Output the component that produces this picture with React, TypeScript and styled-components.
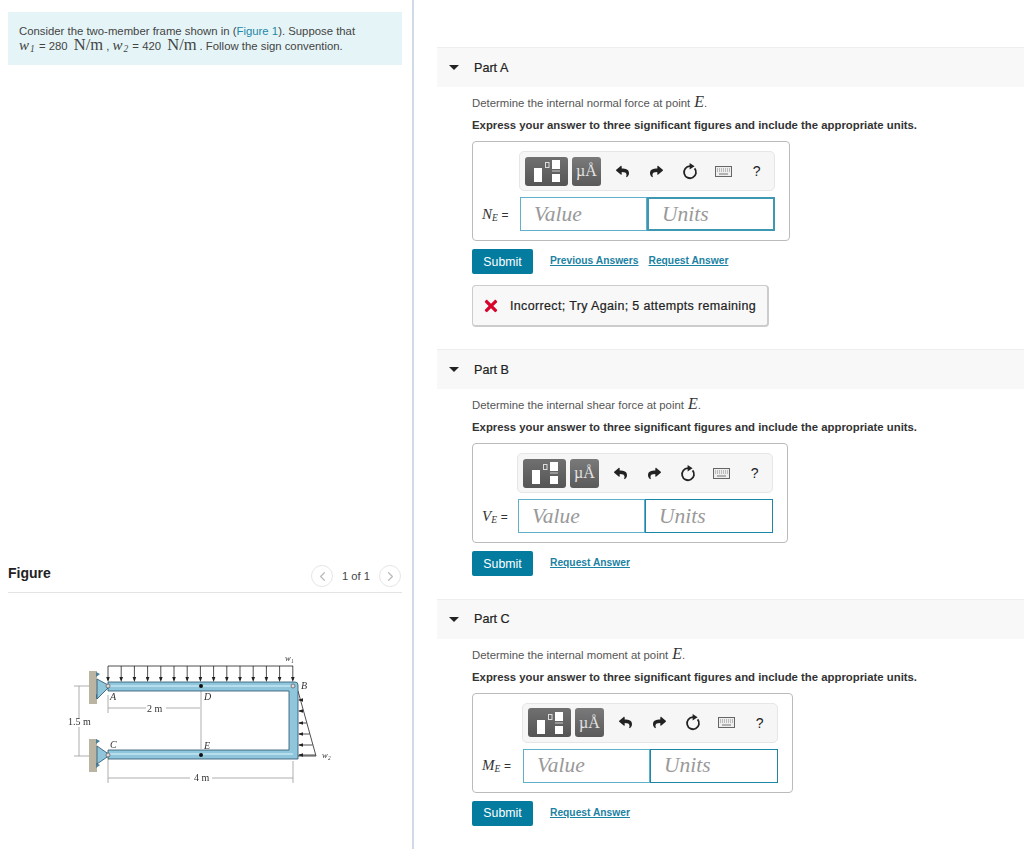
import React from "react";
import styled, { createGlobalStyle } from "styled-components";
import { FaReply, FaShare, FaTimes } from "react-icons/fa";
import { ChevronLeft, ChevronRight } from "lucide-react";

const GlobalStyle = createGlobalStyle`
  html, body {
    margin: 0;
    padding: 0;
    background: #fff;
    font-family: "Liberation Sans", Arial, sans-serif;
    color: #333;
  }
`;

const MathVar = styled.span`
  font-family: "Liberation Serif", "Times New Roman", serif;
  font-style: italic;
  font-size: 15px;
  letter-spacing: 1px;
`;

const Unit = styled.span`
  font-family: "Liberation Serif", "Times New Roman", serif;
  font-size: 16.5px;
  margin: 0 3px;
`;

const Sub = styled.sub`
  font-size: 9.5px;
  line-height: 0;
  vertical-align: -2px;
`;

const TemplateIcon = () => (
  <svg width="26" height="22" viewBox="0 0 26 22">
    <rect x="0" y="8" width="8" height="14" fill="#fff" />
    <rect x="11.5" y="2.5" width="3.5" height="5" fill="none" stroke="#ddd" />
    <rect x="18" y="0" width="8" height="9" fill="#fff" />
    <rect x="18" y="10.5" width="8" height="1" fill="#ccc" />
    <rect x="18" y="14" width="8" height="8" fill="#fff" />
  </svg>
);

const ResetIcon = () => (
  <svg width="16" height="17" viewBox="0 0 16 17">
    <path d="M8 3.2A6 6 0 1 0 12.6 5.3" fill="none" stroke="#222" strokeWidth="1.8" />
    <path d="M7.6 0L12.6 3.2L7.6 6.4Z" fill="#222" />
  </svg>
);

const KeyboardIcon = () => (
  <svg width="17" height="11" viewBox="0 0 17 11">
    <rect x="0.5" y="0.5" width="16" height="10" fill="#eee" stroke="#666" />
    <path d="M2 3h13M2 5h13" stroke="#888" strokeDasharray="1 1" />
    <path d="M4 8h9" stroke="#777" />
  </svg>
);

const FrameFigure = () => {
  const loads = Array.from({ length: 15 }, (_, i) => 58 + i * 13.2);
  const sideLoads = [61, 72, 84, 95, 106, 116];
  return (
    <FigureSvg width="300" height="160" viewBox="0 0 300 160">
      <g stroke="#222" strokeWidth="0.8" fill="none">
        <path d="M58 27H243" />
        {loads.map((x) => (
          <path key={x} d={`M${x} 27V41`} />
        ))}
        <path d="M248 52L266 117H248" />
        {sideLoads.map((y) => (
          <path key={y} d={`M${248 + (y - 52) * 0.27} ${y}H249`} />
        ))}
      </g>
      <g fill="#222">
        {loads.map((x) => (
          <path key={x} d={`M${x - 1.8} 38H${x + 1.8}L${x} 43Z`} />
        ))}
        {sideLoads.map((y) => (
          <path key={y} d={`M248 ${y}L253 ${y - 1.8}V${y + 1.8}Z`} />
        ))}
      </g>
      <g stroke="#999" strokeWidth="0.8" fill="none">
        <path d="M58 56V74M58 120V144M243 122V144M151 52V110" />
        <path d="M24 47H44M24 117H44M29 47V80M29 88V117" />
        <path d="M58 69H96M116 69H150M58 139H140M162 139H243" />
      </g>
      <rect x="39" y="32" width="8" height="33" fill="#b9b5a2" />
      <rect x="39" y="100" width="8" height="33" fill="#b9b5a2" />
      <g fill="#4b7f94">
        <path d="M46 33l4 2-4 3zM46 55l4 2-4 3zM46 100l4 2-4 3zM46 124l4 2-4 3z" />
      </g>
      <g fill="#8fc6dc" stroke="#26526a" strokeWidth="0.8">
        <path d="M47 40L60 47L47 60Z" />
        <path d="M47 107L60 116L47 125Z" />
        <path d="M58 43H245Q248 43 248 46V120H58V111H239V52H58Z" />
      </g>
      <path d="M58 46H243V48H58ZM58 114H243V116H58Z" fill="#b6deed" />
      <g fill="#ddd" stroke="#555" strokeWidth="0.7">
        <circle cx="58" cy="47" r="2" />
        <circle cx="243" cy="47" r="2" />
        <circle cx="58" cy="116" r="2" />
      </g>
      <circle cx="151" cy="47" r="2" fill="#111" />
      <circle cx="151" cy="116" r="2" fill="#111" />
      <g fontFamily="Liberation Serif, serif" fontSize="10" fill="#333">
        <text x="60" y="61" fontStyle="italic">A</text>
        <text x="251" y="50" fontStyle="italic">B</text>
        <text x="60" y="109" fontStyle="italic">C</text>
        <text x="154" y="61" fontStyle="italic">D</text>
        <text x="154" y="110" fontStyle="italic">E</text>
        <text x="97" y="73">2 m</text>
        <text x="18" y="86">1.5 m</text>
        <text x="144" y="142">4 m</text>
        <text x="235" y="22" fontStyle="italic" fontSize="8.5">w₁</text>
        <text x="272" y="119" fontStyle="italic" fontSize="8.5">w₂</text>
      </g>
    </FigureSvg>
  );
};

type PartProps = {
  name: string;
  prompt: string;
  symbol: string;
  indent: number;
  previous?: boolean;
  focused?: boolean;
  feedback?: boolean;
  gap: number;
};

const Part = ({ name, prompt, symbol, indent, previous, focused, feedback, gap }: PartProps) => (
  <PartWrap $gap={gap}>
    <PartHeader>
      <Caret />
      {name}
    </PartHeader>
    <PartBody>
      <Prompt>
        Determine the internal {prompt} at point <PointE>E</PointE>.
      </Prompt>
      <Instruction>Express your answer to three significant figures and include the appropriate units.</Instruction>
      <AnswerBox>
        <Toolbar $indent={indent}>
          <TemplateButton>
            <TemplateIcon />
          </TemplateButton>
          <SymbolButton>µÅ</SymbolButton>
          <ToolIcon $left={5}>
            <FaReply size={13} />
          </ToolIcon>
          <ToolIcon>
            <FaShare size={13} />
          </ToolIcon>
          <ToolIcon>
            <ResetIcon />
          </ToolIcon>
          <ToolIcon>
            <KeyboardIcon />
          </ToolIcon>
          <ToolIcon $text>?</ToolIcon>
        </Toolbar>
        <InputRow>
          <Label $width={indent}>
            {symbol}
            <Sub>E</Sub> <LabelEq>=</LabelEq>
          </Label>
          <ValueInput placeholder="Value" readOnly />
          <UnitsInput placeholder="Units" readOnly $focused={focused} />
        </InputRow>
      </AnswerBox>
      <Actions>
        <SubmitButton>Submit</SubmitButton>
        <ActionLinks>
          {previous && <ActionLink href="#">Previous Answers</ActionLink>}
          <ActionLink href="#">Request Answer</ActionLink>
        </ActionLinks>
      </Actions>
      {feedback && (
        <Feedback>
          <FaTimes color="#d9042b" size={18} />
          Incorrect; Try Again; 5 attempts remaining
        </Feedback>
      )}
    </PartBody>
  </PartWrap>
);

const App = () => (
  <>
    <GlobalStyle />
    <Page>
      <LeftPane>
        <InfoBox>
          Consider the two-member frame shown in (<InfoLink href="#">Figure 1</InfoLink>). Suppose that
          <br />
          <MathVar>
            w<Sub>1</Sub>
          </MathVar>{" "}
          = 280 <Unit>N/m</Unit>,{" "}
          <MathVar>
            w<Sub>2</Sub>
          </MathVar>{" "}
          = 420 <Unit>N/m</Unit>. Follow the sign convention.
        </InfoBox>
        <FigureHeader>
          <FigureTitle>Figure</FigureTitle>
          <Pager>
            <PagerButton>
              <ChevronLeft size={15} />
            </PagerButton>
            1 of 1
            <PagerButton>
              <ChevronRight size={15} />
            </PagerButton>
          </Pager>
        </FigureHeader>
        <FigureWrap>
          <FrameFigure />
        </FigureWrap>
      </LeftPane>
      <RightPane>
        <Part name="Part A" prompt="normal force" symbol="N" indent={38} previous focused feedback gap={0} />
        <Part name="Part B" prompt="shear force" symbol="V" indent={36} gap={22} />
        <Part name="Part C" prompt="moment" symbol="M" indent={41} gap={22.5} />
      </RightPane>
    </Page>
  </>
);

export default App;

const Page = styled.div`
  display: flex;
  width: 1024px;
  height: 849px;
  overflow: hidden;
`;

const LeftPane = styled.div`
  width: 394px;
  flex-shrink: 0;
  padding: 12px 10px 0 8px;
  border-right: 2px solid #cfdbe8;
`;

const InfoBox = styled.div`
  height: 53px;
  box-sizing: border-box;
  padding: 12px 11px;
  background: #e5f5f7;
  font-size: 11.35px;
  line-height: 14px;
  color: #444;
`;

const InfoLink = styled.a`
  color: #1f87a8;
  text-decoration: none;
`;

const FigureHeader = styled.div`
  margin-top: 495px;
  height: 33px;
  box-sizing: border-box;
  padding: 5px 1px 0 0;
  display: flex;
  justify-content: space-between;
  border-bottom: 1px solid #e3e3e3;
`;

const FigureTitle = styled.div`
  font-size: 14px;
  font-weight: bold;
  color: #222;
`;

const Pager = styled.div`
  display: flex;
  align-items: flex-start;
  gap: 9px;
  font-size: 11.2px;
  line-height: 22px;
  color: #444;
`;

const PagerButton = styled.span`
  width: 22px;
  height: 22px;
  box-sizing: border-box;
  border: 1px solid #e6e6e6;
  border-radius: 50%;
  color: #bbb;
  display: flex;
  align-items: center;
  justify-content: center;
`;

const FigureWrap = styled.div`
  margin: 46px 0 0 42px;
`;

const FigureSvg = styled.svg`
  filter: blur(0.35px);
`;

const RightPane = styled.div`
  flex: 1;
  padding-top: 47px;
  padding-left: 23px;
`;

const PartWrap = styled.section<{ $gap: number }>`
  margin-top: ${(p) => p.$gap}px;
`;

const PartHeader = styled.div`
  height: 40px;
  box-sizing: border-box;
  border-top: 1px solid #eee;
  background: #f8f8f8;
  display: flex;
  align-items: center;
  padding-left: 37px;
  font-size: 12.6px;
  color: #222;
  position: relative;
  -webkit-text-stroke: 0.2px #222;
`;

const Caret = styled.span`
  position: absolute;
  left: 12px;
  top: 17px;
  width: 0;
  height: 0;
  border-left: 5px solid transparent;
  border-right: 5px solid transparent;
  border-top: 5px solid #222;
`;

const PartBody = styled.div`
  padding-left: 35px;
`;

const Prompt = styled.div`
  margin-top: 8px;
  height: 16px;
  font-size: 11.35px;
  line-height: 16px;
  color: #555;
`;

const PointE = styled.span`
  margin-left: 1px;
  font-family: "Liberation Serif", serif;
  font-style: italic;
  font-size: 16px;
  line-height: 0;
  color: #333;
`;

const Instruction = styled.div`
  margin-top: 6px;
  font-size: 11.35px;
  line-height: 16px;
  font-weight: bold;
  color: #333;
`;

const AnswerBox = styled.div`
  display: inline-flex;
  flex-direction: column;
  margin-top: 8px;
  padding: 9px 14px 9px 9px;
  border: 1px solid #bbb;
  border-radius: 4px;
  vertical-align: top;
`;

const Toolbar = styled.div<{ $indent: number }>`
  margin-left: ${(p) => p.$indent - 1}px;
  width: 256px;
  height: 40px;
  box-sizing: border-box;
  display: flex;
  align-items: center;
  padding-left: 5px;
  background: #f6f6f6;
  border: 1px solid #e6e6e6;
  border-radius: 5px;
`;

const TemplateButton = styled.div`
  width: 43px;
  height: 29px;
  display: flex;
  align-items: center;
  justify-content: center;
  background: linear-gradient(#707070, #555);
  border-radius: 3px;
`;

const SymbolButton = styled.div`
  width: 29px;
  height: 29px;
  margin-left: 4px;
  display: flex;
  align-items: center;
  justify-content: center;
  background: linear-gradient(#7a7a7a, #5a5a5a);
  border-radius: 3px;
  color: #e4e4e4;
  font-family: "Liberation Serif", serif;
  font-size: 16px;
`;

const ToolIcon = styled.div<{ $left?: number; $text?: boolean }>`
  width: 33.5px;
  margin-left: ${(p) => p.$left ?? 0}px;
  display: flex;
  align-items: center;
  justify-content: center;
  color: #222;
  font-size: ${(p) => (p.$text ? "14px" : "inherit")};
`;

const InputRow = styled.div`
  display: flex;
  align-items: center;
  margin-top: 6px;
`;

const Label = styled.div<{ $width: number }>`
  width: ${(p) => p.$width}px;
  flex-shrink: 0;
  font-family: "Liberation Serif", serif;
  font-style: italic;
  font-size: 15px;
  color: #333;
  white-space: nowrap;
`;

const LabelEq = styled.span`
  font-style: normal;
  font-size: 12px;
  font-family: "Liberation Sans", sans-serif;
`;

const ValueInput = styled.input`
  width: 127px;
  height: 34px;
  box-sizing: border-box;
  border: 1px solid #5fb0c8;
  padding: 0 13px;
  font-family: "Liberation Serif", serif;
  font-style: italic;
  font-size: 21.5px;
  outline: none;
  &::placeholder {
    color: #999;
    opacity: 1;
  }
`;

const UnitsInput = styled(ValueInput)<{ $focused?: boolean }>`
  width: 128px;
  border: ${(p) => (p.$focused ? "2px solid #3f97b2" : "1px solid #1c86a6")};
`;

const Actions = styled.div`
  display: flex;
  align-items: center;
  margin-top: 8px;
`;

const SubmitButton = styled.button`
  width: 61px;
  height: 25px;
  padding: 0;
  border: none;
  border-radius: 2px;
  background: #047c9f;
  color: #fff;
  font-family: "Liberation Sans", sans-serif;
  font-size: 12.3px;
`;

const ActionLinks = styled.div`
  display: flex;
  gap: 10px;
  margin: 0 0 2px 17px;
`;

const ActionLink = styled.a`
  color: #1c82a3;
  font-size: 10.25px;
  font-weight: bold;
`;

const Feedback = styled.div`
  margin-top: 11px;
  width: 297px;
  height: 42px;
  box-sizing: border-box;
  display: flex;
  align-items: center;
  gap: 10px;
  padding: 1px 0 0 9px;
  background: #f8f8f8;
  border: 1px solid #ccc;
  border-bottom-width: 2px;
  border-right-width: 2px;
  border-radius: 4px;
  font-size: 12.5px;
  letter-spacing: 0.35px;
  color: #222;
  -webkit-text-stroke: 0.2px #222;
`;
